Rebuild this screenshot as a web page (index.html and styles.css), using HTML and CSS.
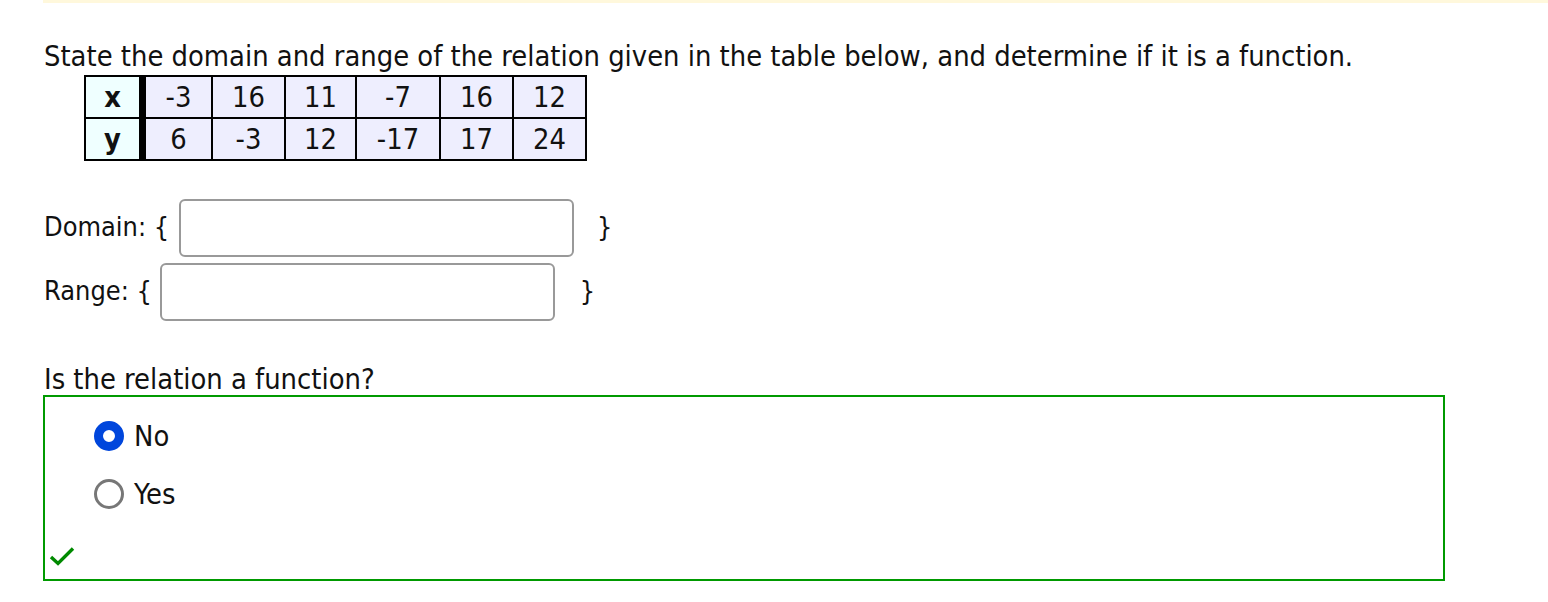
FILE: index.html
```html
<!DOCTYPE html>
<html>
<head>
<meta charset="utf-8">
<link rel="stylesheet" href="styles.css">
</head>
<body>
<div class="topbar"></div>
<div class="content">
  <p class="question">State the domain and range of the relation given in the table below, and determine if it is a function.</p>
  <table class="rel">
    <tr>
      <th>x</th><td class="c1">-3</td><td class="c2">16</td><td class="c3">11</td><td class="c4">-7</td><td class="c5">16</td><td class="c6">12</td>
    </tr>
    <tr>
      <th>y</th><td>6</td><td>-3</td><td>12</td><td>-17</td><td>17</td><td>24</td>
    </tr>
  </table>
  <div class="answer-row domain">
    <span class="label">Domain: {</span>
    <span class="box"></span>
    <span class="brace">}</span>
  </div>
  <div class="answer-row range">
    <span class="label">Range: {</span>
    <span class="box"></span>
    <span class="brace">}</span>
  </div>
  <p class="sub">Is the relation a function?</p>
</div>
<div class="choices">
  <div class="choice"><span class="radio checked"></span><span class="opt">No</span></div>
  <div class="choice"><span class="radio"></span><span class="opt">Yes</span></div>
  <svg class="check" width="26" height="20" viewBox="0 0 26 20"><path d="M2 11 L9 17.5 L24 2.5" fill="none" stroke="#008a00" stroke-width="3.4"/></svg>
</div>
</body>
</html>
```
FILE: styles.css
```css
html, body {
  margin: 0;
  padding: 0;
  background: #fff;
}
body {
  font-family: "DejaVu Sans Condensed", "DejaVu Sans", sans-serif;
  font-size: 28.8px;
  color: #111;
}
.topbar {
  margin-left: 43px;
  height: 3px;
  background: #fff8dc;
}
.content {
  padding-left: 44px;
}
.question {
  margin: 0;
  padding-top: 37px;
  line-height: 32px;
}
.rel {
  border-collapse: collapse;
  margin-left: 40px;
  margin-top: 3px;
  border: 2px solid #000;
}
.rel th, .rel td {
  border: 2px solid #000;
  height: 40px;
  padding: 0;
  text-align: center;
  font-weight: normal;
  line-height: 1;
}
.rel th {
  width: 53px;
  background: #efffff;
  border-right: 7px solid #000;
  font-weight: bold;
}
.rel td {
  background: #eeeefe;
}
.rel td.c1 { width: 65px; }
.rel td.c2 { width: 71px; }
.rel td.c3 { width: 69px; }
.rel td.c4 { width: 82px; }
.rel td.c5 { width: 71px; }
.rel td.c6 { width: 71px; }
.answer-row {
  display: flex;
  align-items: center;
  height: 58px;
  font-size: 26.9px;
  line-height: 30px;
}
.answer-row.domain {
  margin-top: 38px;
}
.answer-row.range {
  margin-top: 6px;
}
.label {
  margin-right: 8px;
  padding-bottom: 3px;
}
.domain .label {
  margin-right: 10px;
}
.box {
  width: 391px;
  height: 54px;
  border: 2px solid #999;
  border-radius: 6px;
}
.brace {
  margin-left: 25px;
  padding-bottom: 3px;
}
.domain .brace {
  margin-left: 23px;
}
.sub {
  margin: 0;
  padding-top: 42px;
  line-height: 32px;
}
.choices {
  margin-left: 43px;
  margin-top: 0;
  width: 1398px;
  height: 182px;
  border: 2px solid #009a00;
  position: relative;
}
.choice {
  display: flex;
  align-items: center;
  margin-left: 49px;
  height: 30px;
}
.choice:first-child {
  margin-top: 24px;
}
.choice + .choice {
  margin-top: 28px;
}
.radio {
  width: 24px;
  height: 24px;
  border: 3px solid #777;
  border-radius: 50%;
  margin-right: 10px;
}
.radio.checked {
  width: 12px;
  height: 12px;
  border: 9px solid #0046dc;
}
.opt {
  line-height: 30px;
}
.check {
  position: absolute;
  left: 4px;
  bottom: 13px;
}
```
